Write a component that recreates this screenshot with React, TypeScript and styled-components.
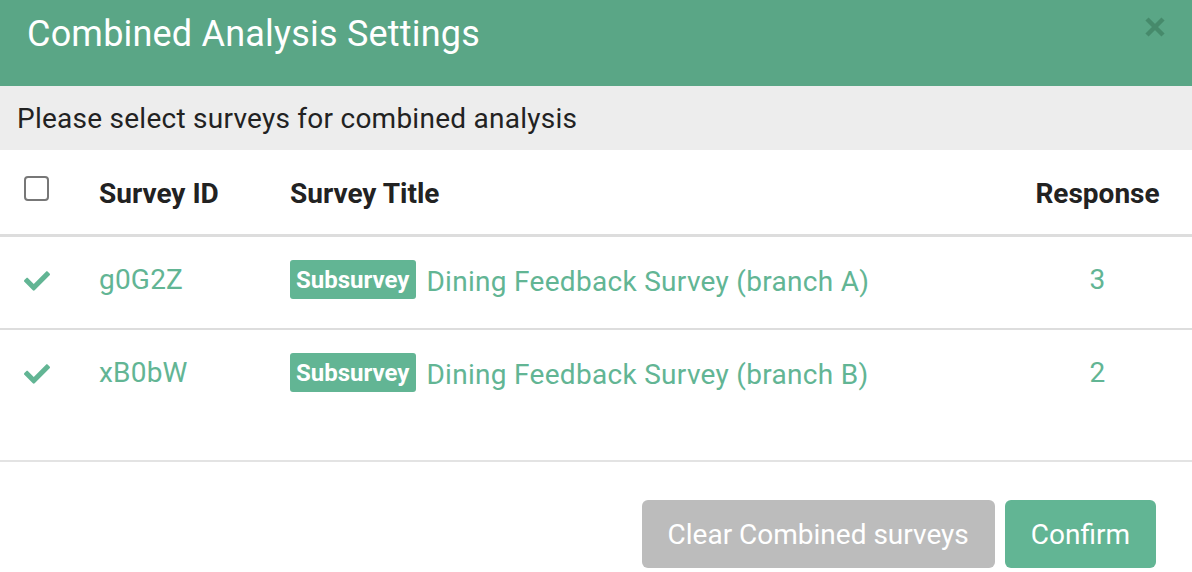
import React from "react";
import styled, { createGlobalStyle } from "styled-components";
import { FaCheck } from "react-icons/fa";

const green = "#62b594";
const headerGreen = "#5aa686";

const GlobalStyle = createGlobalStyle`
  html, body {
    margin: 0;
    padding: 0;
    background: #fff;
    font-family: Roboto, "Liberation Sans", sans-serif;
    color: #222;
  }
  * { box-sizing: border-box; }
`;

type Survey = { id: string; title: string; response: number };

const surveys: Survey[] = [
  { id: "g0G2Z", title: "Dining Feedback Survey (branch A)", response: 3 },
  { id: "xB0bW", title: "Dining Feedback Survey (branch B)", response: 2 },
];

export default function App() {
  return (
    <>
      <GlobalStyle />
      <Modal>
        <Header>
          <Title>Combined Analysis Settings</Title>
          <Close aria-label="close">
            <svg width="22" height="22" viewBox="0 0 22 22">
              <path d="M3 3 L19 19 M19 3 L3 19" stroke="currentColor" strokeWidth="4.5" strokeLinecap="butt" />
            </svg>
          </Close>
        </Header>

        <SubHeader>Please select surveys for combined analysis</SubHeader>

        <Table>
          <HeadRow>
            <Cell><Checkbox type="checkbox" /></Cell>
            <HeadCell>Survey ID</HeadCell>
            <HeadCell>Survey Title</HeadCell>
            <HeadCell $center>Response</HeadCell>
          </HeadRow>
          <Body>
            {surveys.map((s) => (
              <Row key={s.id}>
                <Cell><FaCheck size={26} color={green} /></Cell>
                <IdCell>{s.id}</IdCell>
                <TitleCell>
                  <Badge>Subsurvey</Badge>
                  <SurveyName>{s.title}</SurveyName>
                </TitleCell>
                <IdCell $center>{s.response}</IdCell>
              </Row>
            ))}
          </Body>
        </Table>

        <Footer>
          <Button $variant="gray">Clear Combined surveys</Button>
          <Button>Confirm</Button>
        </Footer>
      </Modal>
    </>
  );
}

const Modal = styled.div`
  width: 1192px;
  display: flex;
  flex-direction: column;
`;

const Header = styled.div`
  height: 86px;
  background: ${headerGreen};
  display: flex;
  align-items: flex-start;
  justify-content: space-between;
  padding: 11px 26px 0 27px;
`;

const Title = styled.h1`
  margin: 0;
  font-size: 36px;
  font-weight: 400;
  color: #fff;
  line-height: 46px;
  letter-spacing: 0.2px;
`;

const Close = styled.button`
  border: none;
  background: none;
  padding: 0;
  margin-top: 5px;
  color: #468a6b;
  cursor: pointer;
`;

const SubHeader = styled.div`
  height: 64px;
  background: #ededed;
  display: flex;
  align-items: center;
  padding-left: 17px;
  font-size: 28px;
  letter-spacing: 0.25px;
  color: #222;
`;

const Table = styled.div`
  display: flex;
  flex-direction: column;
`;

const columns = `
  display: grid;
  grid-template-columns: 75px 191px 1fr 125px;
  padding: 0 32px 0 24px;
  align-items: center;
`;

const HeadRow = styled.div`
  ${columns}
  height: 87px;
  border-bottom: 3px solid #dddddd;
`;

const Body = styled.div`
  padding-bottom: 39px;
  border-bottom: 2px solid #e3e3e3;
`;

const Row = styled.div`
  ${columns}
  height: 93px;
  border-bottom: 2px solid #dddddd;
  &:last-child {
    border-bottom: none;
    height: 91px;
  }
`;

const Cell = styled.div`
  display: flex;
  align-items: center;
  margin-top: -4px;
`;

const HeadCell = styled.div<{ $center?: boolean }>`
  font-size: 28px;
  font-weight: 700;
  color: #222;
  margin-top: 3px;
  text-align: ${(p) => (p.$center ? "center" : "left")};
`;

const IdCell = styled.div<{ $center?: boolean }>`
  font-size: 28px;
  letter-spacing: 0.2px;
  color: ${green};
  margin-top: -6px;
  text-align: ${(p) => (p.$center ? "center" : "left")};
`;

const TitleCell = styled.div`
  display: flex;
  align-items: center;
  gap: 10px;
  margin-top: -6px;
`;

const Badge = styled.span`
  background: ${green};
  color: #fff;
  font-size: 24px;
  font-weight: 700;
  height: 39px;
  padding: 0 7px 0 6px;
  border-radius: 3px;
  display: inline-flex;
  align-items: center;
`;

const SurveyName = styled.span`
  font-size: 28px;
  letter-spacing: 0.3px;
  color: ${green};
  margin-top: 4px;
`;

const Checkbox = styled.input`
  appearance: none;
  width: 25px;
  height: 25px;
  margin: 0;
  border: 2px solid #777;
  border-radius: 4px;
  background: #fff;
  margin-top: -4px;
`;

const Footer = styled.div`
  display: flex;
  justify-content: flex-end;
  gap: 10px;
  padding: 38px 36px 0 0;
`;

const Button = styled.button<{ $variant?: "gray" }>`
  height: 68px;
  border: none;
  border-radius: 6px;
  padding: 0 26px;
  font-family: Roboto, "Liberation Sans", sans-serif;
  font-size: 28px;
  font-weight: 400;
  color: #fff;
  background: ${(p) => (p.$variant === "gray" ? "#bcbcbc" : green)};
`;
